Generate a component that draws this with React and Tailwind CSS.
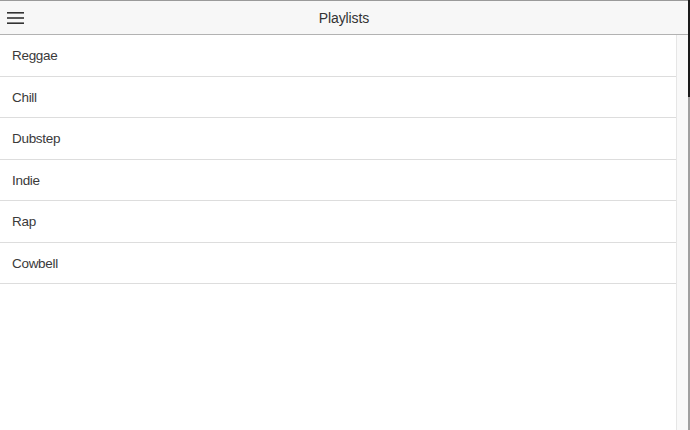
const playlists = ['Reggae', 'Chill', 'Dubstep', 'Indie', 'Rap', 'Cowbell'];

const MenuIcon = () => (
  <svg width="17" height="12" viewBox="0 0 17 12" className="block">
    <rect x="0" y="0" width="17" height="1.6" fill="#333" />
    <rect x="0" y="5.2" width="17" height="1.6" fill="#333" />
    <rect x="0" y="10.4" width="17" height="1.6" fill="#333" />
  </svg>
);

export default function App() {
  return (
    <div
      className="w-[690px] h-[430px] flex bg-white overflow-hidden"
      style={{ fontFamily: '"Liberation Sans", Arial, sans-serif' }}
    >
      <div className="w-[688px] flex flex-col">
        {/* header */}
        <div className="h-[35px] shrink-0 bg-[#f7f7f7] border-t border-t-[#9a9a9a] border-b border-b-[#b2b2b2] relative flex items-center justify-center">
          <button className="absolute left-[7px] top-[11px]">
            <MenuIcon />
          </button>
          <h1 className="text-[14px] tracking-[-0.1px] text-[#333] pt-px">Playlists</h1>
        </div>
        {/* content */}
        <div className="flex-1 flex">
          <div className="w-[677px] border-r border-r-[#e6e6e6]">
            {playlists.map((name) => (
              <div
                key={name}
                className="h-[41.5px] border-b border-b-[#dddddd] flex items-center pl-3 pt-[2px] text-[13.5px] tracking-[-0.3px] text-[#3a3a3a]"
              >
                {name}
              </div>
            ))}
          </div>
          <div className="flex-1 bg-[#f9f9f9]" />
        </div>
      </div>
      {/* scrollbar edge */}
      <div className="w-[2px] flex flex-col">
        <div className="h-[97px] bg-[#1a1a1a]" />
        <div className="flex-1 bg-[#a0a0a0]" />
      </div>
    </div>
  );
}
